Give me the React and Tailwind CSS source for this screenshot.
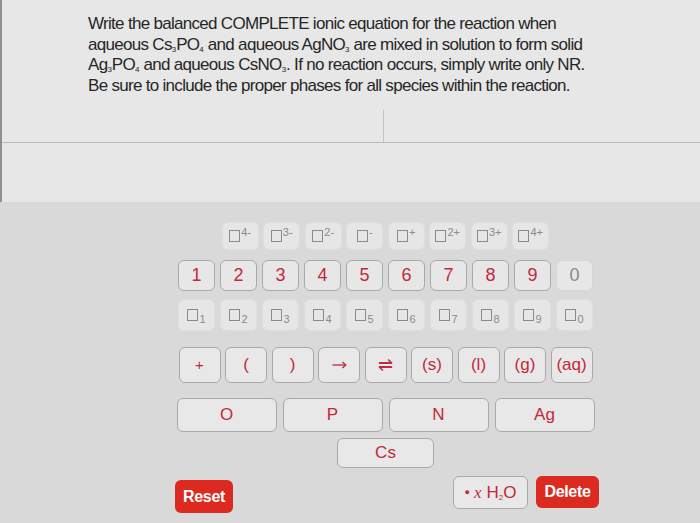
import React from 'react';

const red = 'text-[#c3283a]';

function Box({ className = '' }) {
  return <span className={`inline-block w-[11px] h-[12px] border border-[#8a8a8a] ${className}`} />;
}

function Arrow() {
  return (
    <svg width="15" height="8" viewBox="0 0 15 8" fill="none" stroke="currentColor" strokeWidth="1.3">
      <path d="M0.5 4H13.5" />
      <path d="M10.5 1L13.8 4L10.5 7" />
    </svg>
  );
}

const charges = ['4-', '3-', '2-', '-', '+', '2+', '3+', '4+'];
const subs = ['1', '2', '3', '4', '5', '6', '7', '8', '9', '0'];
const symbols = ['+', '(', ')', '→', '⇌', '(s)', '(l)', '(g)', '(aq)'];
const elements = ['O', 'P', 'N', 'Ag'];

export default function App() {
  return (
    <div className="w-[700px] h-[523px] overflow-hidden flex flex-col font-['Liberation_Sans',Arial,sans-serif]">
      {/* Question */}
      <div className="h-[202px] bg-[#e7e7e7] border-l-2 border-[#8f8f8f] flex flex-col">
        <div className="pl-[86px] pt-[14px] text-[17px] leading-[20.7px] tracking-[-0.7px] text-[#262626]">
          <div>Write the balanced COMPLETE ionic equation for the reaction when</div>
          <div>
            aqueous Cs<sub className="text-[8px] tracking-normal">3</sub>PO<sub className="text-[8px] tracking-normal">4</sub> and aqueous AgNO
            <sub className="text-[8px] tracking-normal">3</sub> are mixed in solution to form solid
          </div>
          <div>
            Ag<sub className="text-[8px] tracking-normal">3</sub>PO<sub className="text-[8px] tracking-normal">4</sub> and aqueous CsNO
            <sub className="text-[8px] tracking-normal">3</sub>. If no reaction occurs, simply write only NR.
          </div>
          <div>Be sure to include the proper phases for all species within the reaction.</div>
        </div>
        <div className="mt-[13px] h-[33px] border-b border-[#b9b9b9] flex">
          <div className="ml-[381px] w-px h-full bg-[#c4c4c4]" />
        </div>
      </div>

      {/* Keypad */}
      <div className="flex-1 bg-[#d9d9d9] pt-[20px]">
        <div className="ml-[175px] w-[421px] flex flex-col items-center">
          <div className="flex gap-[4.5px]">
            {charges.map((c) => (
              <div key={c} className="w-[37px] h-[28px] rounded-[6px] bg-[#e6e6e6] border border-[#dedede] flex items-center justify-center text-[#8a8a8a]">
                <Box />
                <span className="text-[11px] leading-none -mt-[7px] ml-[1px]">{c}</span>
              </div>
            ))}
          </div>

          <div className="mt-[10px] flex gap-[5px]">
            {['1', '2', '3', '4', '5', '6', '7', '8', '9', '0'].map((n) => (
              <div
                key={n}
                className={`w-[37px] h-[31px] rounded-[6px] bg-[#e7e7e7] border ${n === '0' ? 'border-[#d6d6d6] text-[#8a8a8a]' : 'border-[#a9a9a9] ' + red} flex items-center justify-center text-[18px]`}
              >
                {n}
              </div>
            ))}
          </div>

          <div className="mt-[8px] flex gap-[5px]">
            {subs.map((s) => (
              <div key={s} className="w-[37px] h-[32px] rounded-[6px] bg-[#e6e6e6] border border-[#dedede] flex items-center justify-center text-[#8a8a8a]">
                <Box />
                <span className="text-[11px] leading-none mt-[9px] ml-[1px]">{s}</span>
              </div>
            ))}
          </div>

          <div className="mt-[16px] flex gap-[4.5px]">
            {symbols.map((s) => (
              <div
                key={s}
                className={`w-[42px] h-[36px] rounded-[6px] bg-[#e8e8e8] border border-[#a9a9a9] flex items-center justify-center ${red} ${s === '+' ? 'text-[15px]' : s === '⇌' ? 'text-[18px]' : 'text-[17px]'}`}
              >
                {s === '→' ? <Arrow /> : s}
              </div>
            ))}
          </div>

          <div className="mt-[15px] flex gap-[6px]">
            {elements.map((e) => (
              <div key={e} className={`w-[100px] h-[34px] rounded-[6px] bg-[#e8e8e8] border border-[#a9a9a9] flex items-center justify-center text-[17px] ${red}`}>
                {e}
              </div>
            ))}
          </div>

          <div className={`mt-[6px] w-[97px] h-[30px] rounded-[6px] bg-[#e8e8e8] border border-[#a9a9a9] flex items-center justify-center text-[17px] ${red}`}>
            Cs
          </div>

          <div className="mt-[8px] w-full flex items-start justify-between">
            <div className="mt-[4px] w-[58px] h-[33px] rounded-[6px] bg-[#dc2a20] flex items-center justify-center text-white text-[16px] font-bold tracking-[-0.3px]">
              Reset
            </div>
            <div className="flex gap-[8px] mr-[-3px]">
              <div className={`w-[75px] h-[33px] rounded-[6px] bg-[#e8e8e8] border border-[#a9a9a9] flex items-center justify-center ${red}`}>
                <span className="text-[9px] mr-[4px]">●</span>
                <span className="italic font-['Liberation_Serif',serif] text-[17px] mr-[5px]">x</span>
                <span className="text-[17px]">
                  H<sub className="text-[8px]">2</sub>O
                </span>
              </div>
              <div className="w-[63px] h-[32px] rounded-[6px] bg-[#dc2a20] flex items-center justify-center text-white text-[16px] font-bold tracking-[-0.3px]">
                Delete
              </div>
            </div>
          </div>
        </div>
      </div>
    </div>
  );
}
